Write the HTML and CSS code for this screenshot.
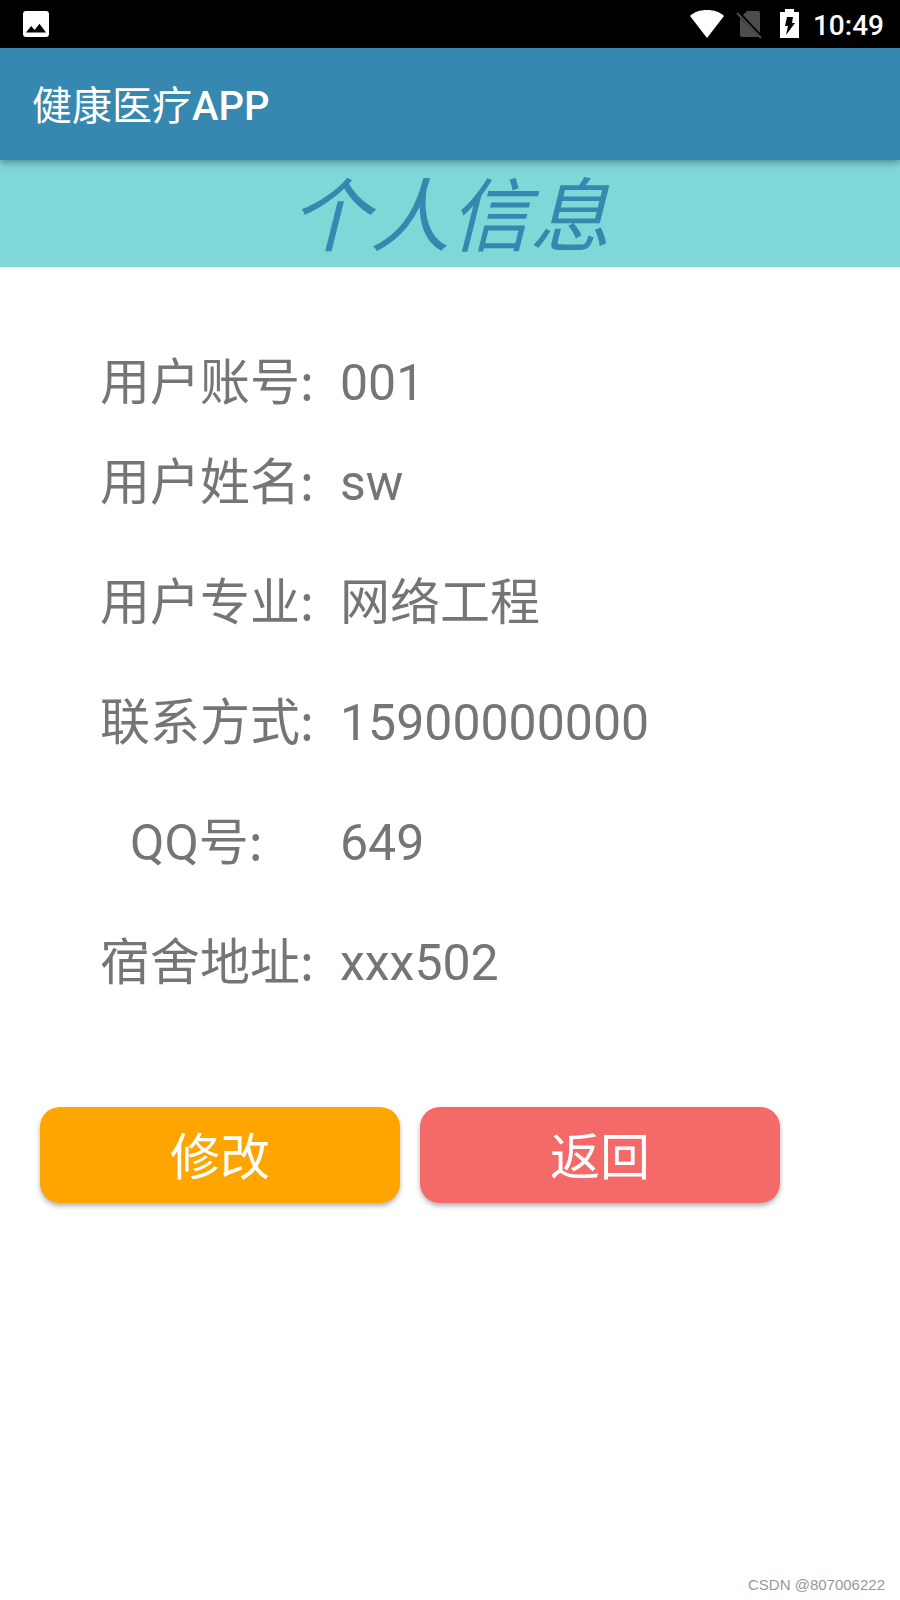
FILE: index.html
```html
<!DOCTYPE html>
<html lang="zh-CN">
<head>
<meta charset="utf-8">
<meta name="viewport" content="width=device-width, initial-scale=1">
<title>健康医疗APP</title>
<link rel="stylesheet" href="styles.css">
</head>
<body>
<div class="status-bar">
  <svg class="icon-photo" viewBox="0 0 26 26" aria-hidden="true">
    <rect width="26" height="26" rx="3" fill="#fff"/>
    <path d="M3 21.500 8.200 15 11.500 19 16.500 12.800 23 21.500z" fill="#000"/>
  </svg>
  <div class="status-right">
    <svg class="icon-wifi" viewBox="0 0 36 30" aria-hidden="true">
      <path d="M18 29 1 7C5 3 11 1 18 1s13 2 17 6z" fill="#fff"/>
    </svg>
    <svg class="icon-sim" viewBox="0 0 26 30" aria-hidden="true">
      <path d="M11 2h11a2 2 0 0 1 2 2v20L7 6zM4 9l19 19H6a2 2 0 0 1-2-2z" fill="#4d4d4d"/>
      <path d="M1 4 25 29" stroke="#4d4d4d" stroke-width="2" fill="none"/>
    </svg>
    <svg class="icon-battery" viewBox="0 0 20 30" aria-hidden="true">
      <path d="M5 0h9v3h5v26H0V3h5z" fill="#fff"/>
      <path d="M7 8h6l-1 6h3L6 26l2-9H5z" fill="#000"/>
    </svg>
    <time class="clock">10:49</time>
  </div>
</div>
<header class="app-bar"><span class="app-name">健康医疗</span>APP</header>
<main>
  <h1 class="page-title">个人信息</h1>
  <dl class="profile">
    <div class="row row-tight"><dt><span class="cjk">用户账号:</span></dt><dd>001</dd></div>
    <div class="row"><dt><span class="cjk">用户姓名:</span></dt><dd>sw</dd></div>
    <div class="row"><dt><span class="cjk">用户专业:</span></dt><dd>网络工程</dd></div>
    <div class="row"><dt><span class="cjk">联系方式:</span></dt><dd>15900000000</dd></div>
    <div class="row"><dt class="indented">QQ<span class="cjk">号:</span></dt><dd>649</dd></div>
    <div class="row"><dt><span class="cjk">宿舍地址:</span></dt><dd>xxx502</dd></div>
  </dl>
  <div class="actions">
    <button type="button" class="btn btn-edit">修改</button>
    <button type="button" class="btn btn-back">返回</button>
  </div>
</main>
<footer class="credit">CSDN @807006222</footer>
</body>
</html>
```
FILE: styles.css
```css
* {
  box-sizing: border-box;
}

body {
  margin: 0;
  min-height: 100vh;
  display: flex;
  flex-direction: column;
  background: #fff;
  color: #757575;
  font-family: Roboto, "Noto Sans CJK SC", sans-serif;
}

.status-bar {
  display: flex;
  align-items: center;
  justify-content: space-between;
  height: 48px;
  padding: 0 16px 0 23px;
  background: #000;
}

.status-right {
  display: flex;
  align-items: center;
}

.icon-photo {
  width: 26px;
  height: 26px;
}

.icon-wifi {
  width: 36px;
  height: 30px;
  margin-right: 11px;
}

.icon-sim {
  width: 26px;
  height: 30px;
  margin-right: 18px;
}

.icon-battery {
  width: 20px;
  height: 30px;
  margin-right: 13px;
}

.clock {
  padding-top: 4px;
  color: #fff;
  font-size: 28px;
  font-weight: 500;
  line-height: 44px;
}

.app-bar {
  position: relative;
  padding: 6px 32px 0;
  background: #3688b0;
  box-shadow: 0 2px 8px rgba(0, 0, 0, 0.4);
  color: #fff;
  font-size: 40px;
  font-weight: 500;
  line-height: 106px;
}

.app-name {
  font-weight: 400;
}

.page-title {
  margin: 0;
  padding-top: 10px;
  background: #7fd7d8;
  color: #3688b0;
  font-size: 80px;
  font-style: italic;
  font-weight: 400;
  line-height: 97px;
  text-align: center;
}

.profile {
  margin: 0;
  padding: 86px 20px 0 100px;
  font-size: 50px;
  line-height: 60px;
}

.row {
  display: grid;
  grid-template-columns: 240px 1fr;
  margin-bottom: 60px;
}

.row-tight {
  margin-bottom: 40px;
}

.indented {
  padding-left: 30px;
}

.cjk {
  font-family: "Noto Sans CJK SC", sans-serif;
  line-height: 1;
}

.row dd {
  margin: 0;
}

.actions {
  display: grid;
  grid-template-columns: 1fr 1fr;
  gap: 20px;
  padding: 54px 120px 0 40px;
}

.btn {
  height: 96px;
  padding: 6px 0 0;
  border: 0;
  border-radius: 20px;
  box-shadow: 0 3px 5px rgba(0, 0, 0, 0.3);
  color: #fff;
  font: 400 50px/60px Roboto, "Noto Sans CJK SC", sans-serif;
}

.btn-edit {
  background: #ffa500;
}

.btn-back {
  background: #f46a69;
}

.credit {
  margin-top: auto;
  padding: 0 15px 6px;
  color: #999;
  font: 15px/18px "Liberation Sans", sans-serif;
  text-align: right;
}
```
